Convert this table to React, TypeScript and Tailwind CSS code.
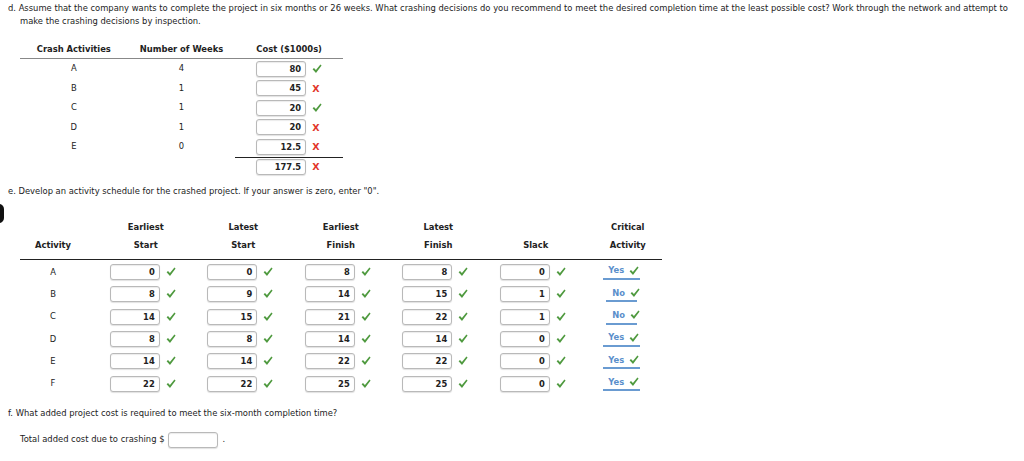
import React from 'react';

function Check() {
  return (
    <svg width="10" height="10" viewBox="0 0 10 10" className="shrink-0">
      <path d="M0.6 5.2 L2 4 L3.9 6.1 L8.4 0.6 L9.6 1.6 L4 8.9 Z" fill="#4f9a3f" />
    </svg>
  );
}

function Cross() {
  return <span className="w-[10px] shrink-0 text-[9.5px] font-bold leading-none text-[#e2362c]">X</span>;
}

function Box({ value }: { value: string }) {
  return (
    <div className="h-[16px] w-[50px] shrink-0 rounded-[3px] border border-[#b9b9b9] bg-white pr-[4px] text-right font-bold leading-[14px] shadow-[inset_0_1px_1px_rgba(0,0,0,0.08),0_1px_1px_rgba(0,0,0,0.12)]">
      {value}
    </div>
  );
}

const crash = [
  { act: 'A', weeks: '4', cost: '80', ok: true },
  { act: 'B', weeks: '1', cost: '45', ok: false },
  { act: 'C', weeks: '1', cost: '20', ok: true },
  { act: 'D', weeks: '1', cost: '20', ok: false },
  { act: 'E', weeks: '0', cost: '12.5', ok: false },
];

const schedule = [
  { act: 'A', es: '0', ls: '0', ef: '8', lf: '8', slack: '0', crit: 'Yes' },
  { act: 'B', es: '8', ls: '9', ef: '14', lf: '15', slack: '1', crit: 'No' },
  { act: 'C', es: '14', ls: '15', ef: '21', lf: '22', slack: '1', crit: 'No' },
  { act: 'D', es: '8', ls: '8', ef: '14', lf: '14', slack: '0', crit: 'Yes' },
  { act: 'E', es: '14', ls: '14', ef: '22', lf: '22', slack: '0', crit: 'Yes' },
  { act: 'F', es: '22', ls: '22', ef: '25', lf: '25', slack: '0', crit: 'Yes' },
];

const heads = [
  ['', 'Activity', 'pr-[8px]'],
  ['Earliest', 'Start', 'pl-[6px]'],
  ['Latest', 'Start', 'pl-[6px]'],
  ['Earliest', 'Finish', 'pl-[6px]'],
  ['Latest', 'Finish', 'pl-[6px]'],
  ['', 'Slack', 'pl-[6px]'],
  ['Critical', 'Activity', 'pl-[12px]'],
];

function Cell({ value }: { value: string }) {
  return (
    <div className="flex items-center justify-center gap-[6px]">
      <Box value={value} />
      <Check />
    </div>
  );
}

export default function App() {
  return (
    <div className="relative h-[461px] w-[1024px] overflow-hidden bg-white font-['DejaVu_Sans',_Verdana,_sans-serif] text-[8.4px] text-[#222]">
      <div className="pl-[20px] pt-[2px] leading-[13px] -indent-[12px]">
        d. Assume that the company wants to complete the project in six months or 26 weeks. What crashing decisions do you recommend to meet the desired completion time at the least possible cost? Work through the network and attempt to
        <br />
        <span>make the crashing decisions by inspection.</span>
      </div>

      {/* crash table */}
      <div className="ml-[20px] mt-[15px] w-[323px]">
        <div className="grid h-[16px] grid-cols-3 border-b-[1.5px] border-[#888] font-bold leading-[12px]">
          <div className="text-center">Crash Activities</div>
          <div className="text-center">Number of Weeks</div>
          <div className="text-center">Cost ($1000s)</div>
        </div>
        {crash.map((r) => (
          <div key={r.act} className="grid h-[19.5px] grid-cols-3 items-center">
            <div className="text-center">{r.act}</div>
            <div className="text-center">{r.weeks}</div>
            <div className="flex items-center justify-center gap-[6px]">
              <Box value={r.cost} />
              {r.ok ? <Check /> : <Cross />}
            </div>
          </div>
        ))}
        <div className="grid h-[19.5px] grid-cols-3 items-center">
          <div />
          <div />
          <div className="flex h-full items-center justify-center gap-[6px] border-t border-[#222]">
            <Box value="177.5" />
            <Cross />
          </div>
        </div>
      </div>

      <div className="mt-[9px] pl-[8px] leading-[13px]">
        e. Develop an activity schedule for the crashed project. If your answer is zero, enter "0".
      </div>

      <div className="absolute left-[-6px] top-[204px] h-[19px] w-[10px] rounded-full bg-[#111]" />

      {/* schedule table */}
      <div className="ml-[20px] mt-[20px] w-[642px]">
        <div className="grid grid-cols-[74px_97.5px_97.5px_97.5px_97.5px_97.5px_1fr] border-b-[1.5px] border-[#222] pb-[5px] font-bold leading-[18px]">
          {heads.map(([a, b, pad], i) => (
            <div key={i} className={`text-center ${pad}`}>
              <div className="h-[18px]">{a}</div>
              <div className="h-[18px]">{b}</div>
            </div>
          ))}
        </div>
        <div className="pt-[1px]">
          {schedule.map((r) => (
            <div key={r.act} className="grid h-[22.3px] grid-cols-[74px_97.5px_97.5px_97.5px_97.5px_97.5px_1fr] items-center">
              <div className="pr-[8px] text-center">{r.act}</div>
              <Cell value={r.es} />
              <Cell value={r.ls} />
              <Cell value={r.ef} />
              <Cell value={r.lf} />
              <Cell value={r.slack} />
              <div className="flex justify-center">
                <div
                  className={`flex items-center gap-[5px] border-b-2 border-[#6a9bd1] pb-[1px] font-bold text-[#5b8fcb] ${
                    r.crit === 'Yes' ? 'w-[37px] pl-[5px]' : 'w-[31px] pl-[6px]'
                  }`}
                >
                  <span>{r.crit}</span>
                  <Check />
                </div>
              </div>
            </div>
          ))}
        </div>
      </div>

      <div className="mt-[12px] pl-[8px] leading-[13px]">
        f. What added project cost is required to meet the six-month completion time?
      </div>
      <div className="mt-[12px] flex items-center pl-[20px] leading-[13px]">
        <span>Total added cost due to crashing $</span>
        <div className="ml-[4px] h-[16px] w-[50px] rounded-[3px] border border-[#b9b9b9] bg-white shadow-[inset_0_1px_1px_rgba(0,0,0,0.08),0_1px_1px_rgba(0,0,0,0.12)]" />
        <span className="ml-[4px]">.</span>
      </div>
    </div>
  );
}
